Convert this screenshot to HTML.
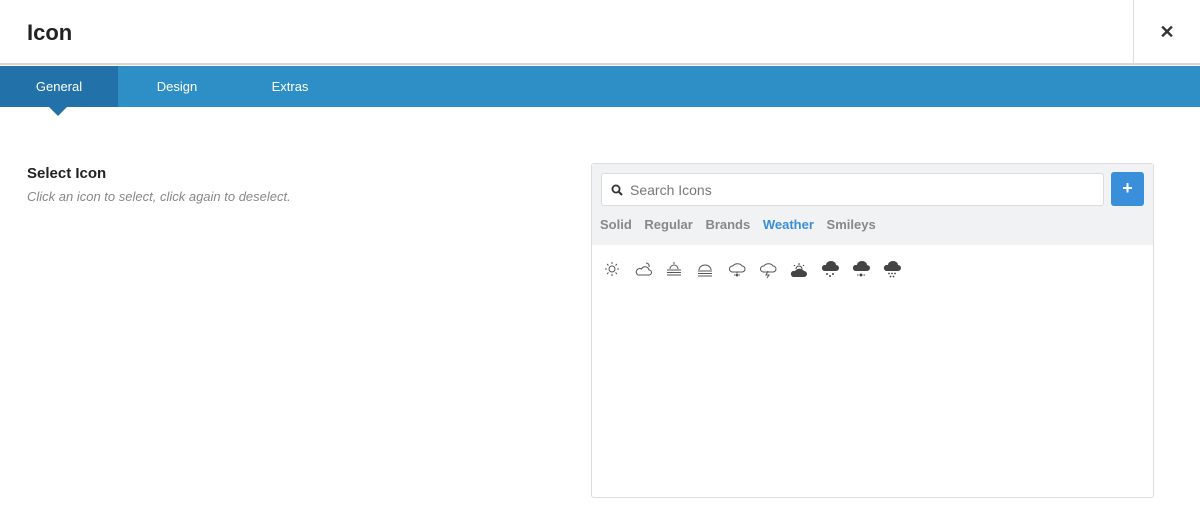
<!DOCTYPE html>
<html><head><style>
*{margin:0;padding:0;box-sizing:border-box}
body{width:1200px;height:523px;background:#fff;font-family:"Liberation Sans",sans-serif;position:relative;overflow:hidden}
.hdr{position:absolute;left:0;top:0;width:1200px;height:65px;border-bottom:2px solid #d6d6d6}
.hdr h1{position:absolute;left:27px;top:20px;font-size:22px;font-weight:bold;color:#222}
.close{position:absolute;left:1133px;top:0;width:67px;height:64px;border-left:1px solid #ddd;font-size:18px;color:#333;text-align:center;line-height:64px;font-weight:bold}
.tabs{position:absolute;left:0;top:66px;width:1200px;height:41px;background:#2e8fc7}
.tab{position:absolute;top:0;height:41px;line-height:41px;color:#fff;font-size:13px;text-align:center}
.act{background:#2271a9}
.arrow{position:absolute;left:49px;top:107px;width:0;height:0;border-left:9px solid transparent;border-right:9px solid transparent;border-top:9px solid #2271a9}
.lbl{position:absolute;left:27px;top:165px;font-size:15px;font-weight:bold;color:#222}
.desc{position:absolute;left:27px;top:189px;font-size:13px;font-style:italic;color:#888}
.panel{position:absolute;left:591px;top:163px;width:563px;height:335px;border:1px solid #ddd;border-radius:3px;background:#fff}
.top{position:absolute;left:0;top:0;width:561px;height:81px;background:#f1f2f4}
.search{position:absolute;left:9px;top:9px;width:503px;height:33px;background:#fff;border:1px solid #dcdcdc;border-radius:3px}
.search span{position:absolute;left:28px;top:8px;font-size:14px;color:#777}
.plus{position:absolute;left:519px;top:8px;width:33px;height:34px;background:#3a8fda;border-radius:3px;color:#fff;font-weight:bold;font-size:18px;text-align:center;line-height:33px}
.cats{position:absolute;left:8px;top:53px;font-size:13px;font-weight:bold;color:#888}
.cats b{margin-right:9px}
.icons{position:absolute;left:12px;top:97px}
.icons svg{position:absolute;top:0}
</style></head><body>
<div class="hdr"><h1>Icon</h1><div class="close">✕</div></div>
<div class="tabs">
<div class="tab act" style="left:0;width:118px">General</div>
<div class="tab" style="left:118px;width:118px">Design</div>
<div class="tab" style="left:236px;width:108px">Extras</div>
</div>
<div class="arrow"></div>
<div class="lbl">Select Icon</div>
<div class="desc">Click an icon to select, click again to deselect.</div>
<div class="panel">
<div class="top">
<div class="search"><svg style="position:absolute;left:9px;top:10px" width="12" height="12" viewBox="0 0 12 12"><circle cx="5" cy="5" r="3.6" fill="none" stroke="#333" stroke-width="1.8"/><path d="M7.5 7.5L11 11" stroke="#333" stroke-width="2"/></svg><span>Search Icons</span></div>
<div class="plus">+</div>
<div class="cats"><b>Solid</b> <b>Regular</b> <b>Brands</b> <b style="color:#3a8fda">Weather</b> <b>Smileys</b></div>
</div>
<div class="icons">
<svg style="left:0" width="16" height="16" viewBox="0 0 16 16"><circle cx="8" cy="8" r="3" fill="none" stroke="#555"/><path d="M8 1v2M8 13v2M1 8h2M13 8h2M3 3l1.5 1.5M11.5 11.5L13 13M3 13l1.5-1.5M11.5 4.5L13 3" stroke="#555"/></svg>
<svg style="left:31px" width="18" height="16" viewBox="0 0 18 16"><path d="M3 14h11a2.5 2.5 0 0 0 0-5a4 4 0 0 0-7.5-1A3 3 0 0 0 3 14z" fill="none" stroke="#555"/><path d="M11 2a3 3 0 0 1 3 4" fill="none" stroke="#555"/></svg>
<svg style="left:62px" width="16" height="16" viewBox="0 0 16 16"><path d="M4 8a4 4 0 0 1 8 0M1 9h14M1 11.5h14M1 14h14M8 1v2" fill="none" stroke="#555"/></svg>
<svg style="left:93px" width="16" height="16" viewBox="0 0 16 16"><path d="M2 9a6 5 0 0 1 12 0M1 10h14M1 12.5h14M1 15h14" fill="none" stroke="#555"/></svg>
<svg style="left:124px" width="18" height="18" viewBox="0 0 18 18"><path d="M4 11h10a3 3 0 0 0 0-6a5 4 0 0 0-9 0a3 3 0 0 0-1 6z" fill="none" stroke="#555"/><circle cx="9" cy="14" r="1.5" fill="#555"/><path d="M6 14h1M11 14h1M9 11v1" stroke="#555"/></svg>
<svg style="left:155px" width="18" height="18" viewBox="0 0 18 18"><path d="M4 11h10a3 3 0 0 0 0-6a5 4 0 0 0-9 0a3 3 0 0 0-1 6z" fill="none" stroke="#555"/><path d="M9 10l-2 4h3l-2 3" fill="none" stroke="#555"/></svg>
<svg style="left:186px" width="18" height="18" viewBox="0 0 18 18"><path d="M3 16h11a3 3 0 0 0 0-6a5 4 0 0 0-9 0a3 3 0 0 0-2 6z" fill="#444"/><path d="M9 2v2M4 4l1 1M14 4l-1 1M6 8a3 3 0 0 1 6 0" fill="none" stroke="#444"/></svg>
<svg style="left:217px" width="18" height="18" viewBox="0 0 18 18"><path d="M3 10h12a3 3 0 0 0 0-6a5 4 0 0 0-10 0a3 3 0 0 0-2 6z" fill="#444"/><circle cx="6" cy="13" r="1" fill="#444"/><circle cx="9" cy="15" r="1" fill="#444"/><circle cx="12" cy="13" r="1" fill="#444"/></svg>
<svg style="left:248px" width="18" height="18" viewBox="0 0 18 18"><path d="M3 10h12a3 3 0 0 0 0-6a5 4 0 0 0-10 0a3 3 0 0 0-2 6z" fill="#444"/><circle cx="9" cy="14" r="1.5" fill="#444"/><path d="M5 14h1.5M11.5 14H13" stroke="#444"/></svg>
<svg style="left:279px" width="18" height="18" viewBox="0 0 18 18"><path d="M3 10h12a3 3 0 0 0 0-6a5 4 0 0 0-10 0a3 3 0 0 0-2 6z" fill="#444"/><circle cx="6" cy="12.5" r=".9" fill="#444"/><circle cx="9" cy="12.5" r=".9" fill="#444"/><circle cx="12" cy="12.5" r=".9" fill="#444"/><circle cx="7.5" cy="15.5" r=".9" fill="#444"/><circle cx="10.5" cy="15.5" r=".9" fill="#444"/></svg>
</div>
</div>
</body></html>
